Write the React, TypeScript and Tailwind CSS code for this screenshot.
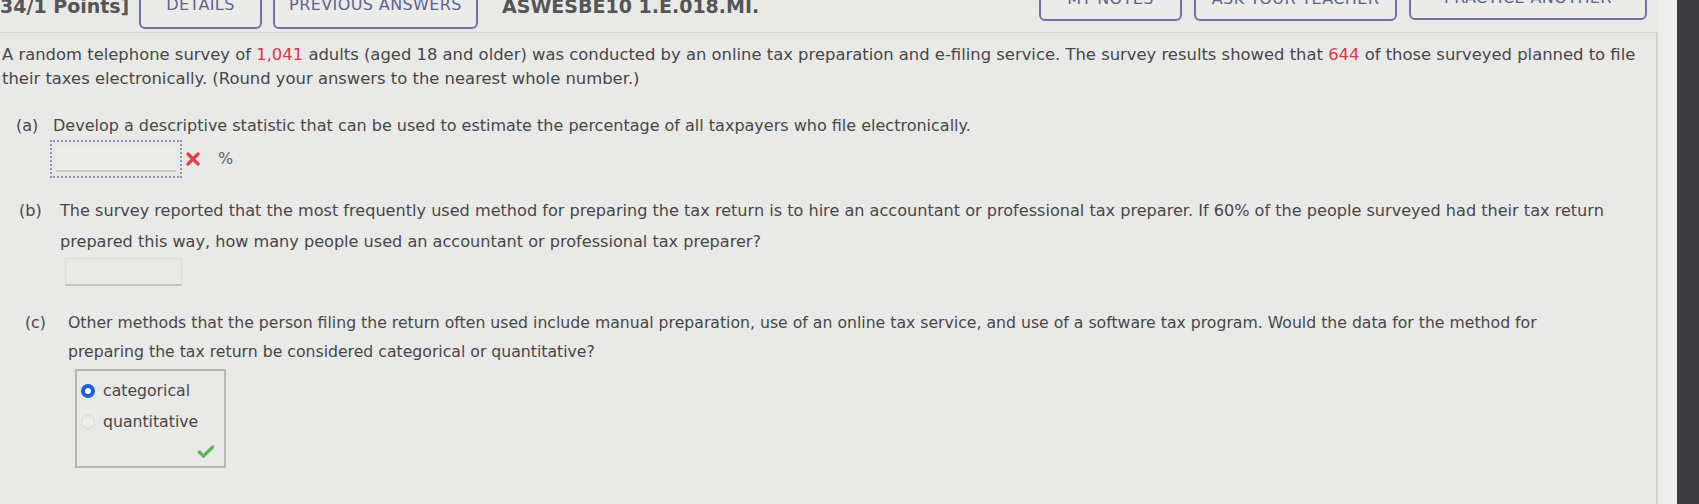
import { Check, X } from "lucide-react";

const font = { fontFamily: '"DejaVu Sans", Verdana, sans-serif' };

function HeaderButton({ label, width, lift, pad }: { label: string; width: string; lift: string; pad: string }) {
  return (
    <div
      className={`flex h-[42px] ${width} ${lift} ${pad} shrink-0 items-center justify-center rounded-[6px] border-2 border-[#6f73a6] bg-[#ebebe9] text-[16px] tracking-wide text-[#5b6592]`}
    >
      {label}
    </div>
  );
}

export default function App() {
  return (
    <div
      className="flex h-[504px] w-[1699px] overflow-hidden bg-[#e9e9e7] text-[#474747]"
      style={font}
    >
      <div className="flex w-[1658px] shrink-0 flex-col">
        {/* header */}
        <div className="flex h-[33px] shrink-0 items-start border-b border-[#d2d2d0]">
          <div className="-mt-[8px] w-[139px] shrink-0 text-[19px] font-bold text-[#555]">34/1 Points]</div>
          <HeaderButton label="DETAILS" width="w-[123px]" lift="-mt-[13px]" pad="pb-[7px]" />
          <div className="w-[11px]" />
          <HeaderButton label="PREVIOUS ANSWERS" width="w-[205px]" lift="-mt-[13px]" pad="pb-[7px]" />
          <div className="-mt-[8px] ml-[24px] w-[537px] shrink-0 text-[19px] font-bold text-[#555]">
            ASWESBE10 1.E.018.MI.
          </div>
          <HeaderButton label="MY NOTES" width="w-[143px]" lift="-mt-[21px]" pad="pb-[2px]" />
          <div className="w-[12px]" />
          <HeaderButton label="ASK YOUR TEACHER" width="w-[203px]" lift="-mt-[21px]" pad="pb-[2px]" />
          <div className="w-[12px]" />
          <HeaderButton label="PRACTICE ANOTHER" width="w-[238px]" lift="-mt-[22px]" pad="pb-[2px]" />
        </div>

        {/* question panel */}
        <div className="flex-1 border-r-2 border-[#d4d4d2] pl-[2px] pt-[10px]">
          <p className="w-[1645px] text-[16.4px] leading-[24px]">
            A random telephone survey of <span className="text-[#d8394a]">1,041</span> adults (aged 18 and older) was
            conducted by an online tax preparation and e-filing service. The survey results showed that{" "}
            <span className="text-[#d8394a]">644</span> of those surveyed planned to file their taxes electronically.
            (Round your answers to the nearest whole number.)
          </p>

          {/* (a) */}
          <div className="mt-[23px] flex text-[16px] leading-[24px]">
            <span className="w-[51px] shrink-0 pl-[14px]">(a)</span>
            <div>
              <p>Develop a descriptive statistic that can be used to estimate the percentage of all taxpayers who file electronically.</p>
              <div className="mt-[2px] -ml-[3px] flex items-center">
                <div className="h-[38px] w-[132px] border-2 border-dotted border-[#8e93b6] p-[4px]">
                  <div className="h-full w-full border-b-2 border-[#c9c9c7] bg-[#ececea]" />
                </div>
                <X className="ml-[1px] h-[20px] w-[20px] text-[#e2404f]" strokeWidth={4} />
                <span className="ml-[15px] text-[#666]">%</span>
              </div>
            </div>
          </div>

          {/* (b) */}
          <div className="mt-[17px] flex text-[16.1px] leading-[31px]">
            <span className="w-[58px] shrink-0 pl-[17px]">(b)</span>
            <div className="w-[1580px]">
              <p>
                The survey reported that the most frequently used method for preparing the tax return is to hire an
                accountant or professional tax preparer. If 60% of the people surveyed had their tax return prepared
                this way, how many people used an accountant or professional tax preparer?
              </p>
              <div className="mt-[1px] ml-[5px] h-[28px] w-[117px] border border-b-2 border-[#dcdcda] border-b-[#c4c4c2]" />
            </div>
          </div>

          {/* (c) */}
          <div className="mt-[22px] flex text-[15.7px] leading-[29px]">
            <span className="w-[66px] shrink-0 pl-[23px]">(c)</span>
            <div className="w-[1533px]">
              <p>
                Other methods that the person filing the return often used include manual preparation, use of an online
                tax service, and use of a software tax program. Would the data for the method for preparing the tax
                return be considered categorical or quantitative?
              </p>
              <div className="mt-[3px] ml-[7px] flex h-[99px] w-[151px] flex-col border-2 border-[#b5b8ae] pl-[4px] pt-[4px]">
                <label className="flex h-[31px] items-center gap-[8px]">
                  <span className="h-[14px] w-[14px] rounded-full border-[4px] border-[#1b5fd8] bg-white" />
                  <span>categorical</span>
                </label>
                <label className="flex h-[31px] items-center gap-[8px]">
                  <span className="h-[14px] w-[14px] rounded-full border border-[#d6d6d4] bg-[#ededeb]" />
                  <span>quantitative</span>
                </label>
                <div className="flex flex-1 items-center justify-end pr-[8px]">
                  <Check className="h-[20px] w-[20px] text-[#5db555]" strokeWidth={4} />
                </div>
              </div>
            </div>
          </div>
        </div>
      </div>
      <div className="w-[19px] shrink-0 bg-[#eeeeec]" />
      <div className="flex-1 bg-[#3a3a3c]" />
    </div>
  );
}
